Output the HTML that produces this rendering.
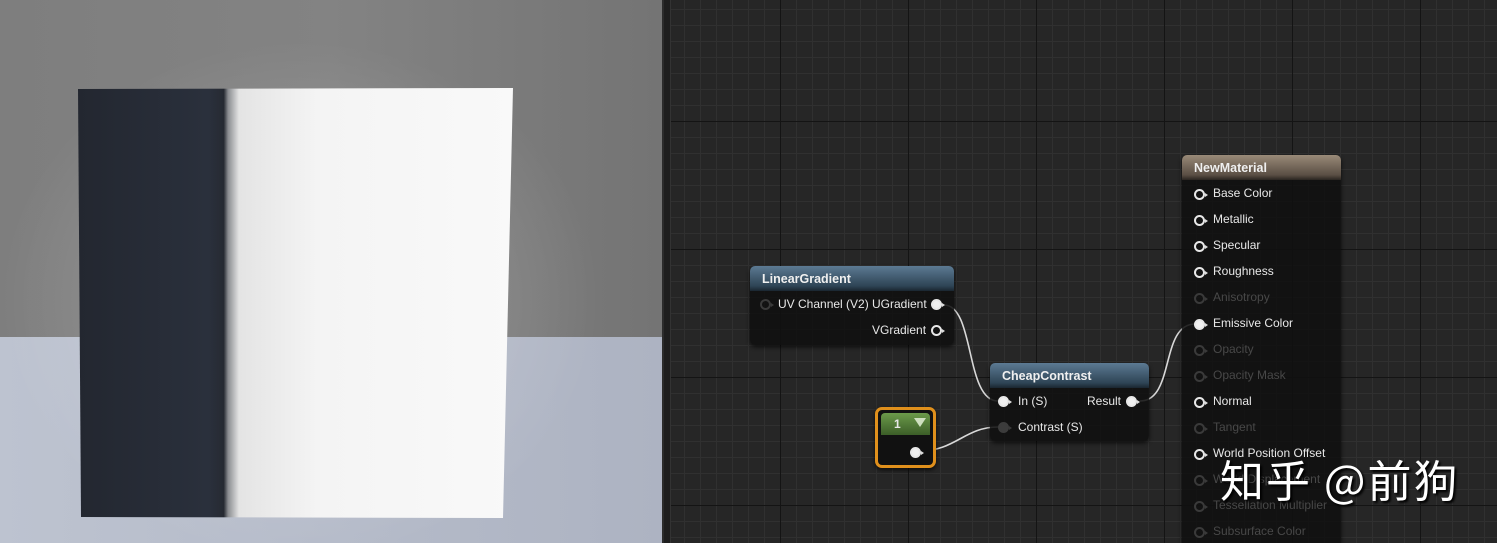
<!DOCTYPE html>
<html><head><meta charset="utf-8"><style>
*{margin:0;padding:0;box-sizing:border-box}
html,body{width:1497px;height:543px;overflow:hidden}
body{position:relative;background:#262626;font-family:"Liberation Sans","Noto Sans CJK SC",sans-serif}
#vp{position:absolute;left:0;top:0;width:662px;height:543px}
#sep{position:absolute;left:662px;top:0;width:9px;height:543px;background:#1e1e1e;border-left:2px solid #2c2c2c;border-right:1px solid #333}
#graph{position:absolute;left:671px;top:0;width:826px;height:543px;background-color:#262626;
background-image:
linear-gradient(to right,#141414 1px,transparent 1px),
linear-gradient(to bottom,#141414 1px,transparent 1px),
linear-gradient(to right,#303030 1px,transparent 1px),
linear-gradient(to bottom,#303030 1px,transparent 1px);
background-size:128px 128px,128px 128px,16px 16px,16px 16px;
background-position:109px 0,0 121px,13px 0,0 9px}
.node{position:absolute;background:rgba(16,16,16,.88);border-radius:5px;box-shadow:0 2px 4px rgba(0,0,0,.7);color:#e8e8e8;font-size:12px}
.hdr{height:25px;border-radius:5px 5px 0 0;font-weight:bold;font-size:12.5px;padding:6px 0 0 12px;color:#f0f0f0}
.row{position:absolute;font-size:12px;white-space:nowrap}
.pin{position:absolute;width:11px;height:11px;border-radius:50%;border:2px solid #e8e8e8}
.pin.f{background:#f0f0f0}
.pin.d{border-color:#3a3a3a}
.pin.g{background:#3c3c3c;border-color:#3c3c3c}
.pin::after{content:"";position:absolute;right:-5px;top:2px;border-left:3px solid #ddd;border-top:2.5px solid transparent;border-bottom:2.5px solid transparent}
.pin.d::after,.pin.g::after{border-left-color:#3a3a3a}
.dim{color:#484848}
#wm{position:absolute;left:1220px;top:448px;font-size:44px;letter-spacing:2px;color:#fff;font-family:"Noto Sans CJK SC",sans-serif;text-shadow:2px 2px 2px #000;white-space:nowrap;line-height:60px}
</style></head><body>
<div id="vp">
<svg width="662" height="543">
<defs>
<linearGradient id="bg" x1="0" x2="1"><stop offset="0" stop-color="#7e7e7e"/><stop offset=".5" stop-color="#838383"/><stop offset="1" stop-color="#747474"/></linearGradient>
<linearGradient id="fl" x1="0" x2="1"><stop offset="0" stop-color="#bdc3d0"/><stop offset="1" stop-color="#adb3c2"/></linearGradient>
<linearGradient id="pl" x1="78" x2="513" gradientUnits="userSpaceOnUse">
<stop offset="0" stop-color="#232730"/><stop offset=".3" stop-color="#2a303c"/><stop offset=".335" stop-color="#262a32"/><stop offset=".345" stop-color="#8a8c90"/><stop offset=".37" stop-color="#e4e4e4"/><stop offset=".55" stop-color="#f4f4f4"/><stop offset="1" stop-color="#f9f9f9"/></linearGradient>
<radialGradient id="glow" cx=".5" cy=".5" r=".5"><stop offset="0" stop-color="#fff" stop-opacity=".25"/><stop offset="1" stop-color="#fff" stop-opacity="0"/></radialGradient>
</defs>
<rect width="662" height="337" fill="url(#bg)"/>
<polygon points="0,337 662,337 662,543 0,543" fill="url(#fl)"/>
<ellipse cx="300" cy="300" rx="300" ry="260" fill="url(#glow)"/>
<polygon points="78,89 513,88 503,518 81,517" fill="url(#pl)"/>
</svg>
</div>
<div id="sep"></div>
<div id="graph"></div>
<svg style="position:absolute;left:0;top:0" width="1497" height="543">
<g fill="none" stroke="#d8d8d8" stroke-width="1.6">
<path d="M944,305 C975,305 965,401 998,401"/>
<path d="M920,451 C955,451 965,427 998,427"/>
<path d="M1140,401 C1175,401 1160,324 1195,324"/>
</g></svg>

<div class="node" style="left:750px;top:266px;width:204px;height:79px">
<div class="hdr" style="background:linear-gradient(#5c7a93,#2e4455 80%,#1a2630)">LinearGradient</div>
<div class="pin d" style="left:10px;top:33px"></div>
<div class="row" style="left:28px;top:31px">UV Channel (V2)</div>
<div class="row" style="left:122px;top:31px">UGradient</div>
<div class="pin f" style="left:181px;top:33px"></div>
<div class="row" style="left:122px;top:57px">VGradient</div>
<div class="pin" style="left:181px;top:59px"></div>
</div>

<div class="node" style="left:990px;top:363px;width:159px;height:78px">
<div class="hdr" style="background:linear-gradient(#5c7a93,#2e4455 80%,#1a2630)">CheapContrast</div>
<div class="pin f" style="left:8px;top:33px"></div>
<div class="row" style="left:28px;top:31px">In (S)</div>
<div class="row" style="left:97px;top:31px">Result</div>
<div class="pin f" style="left:136px;top:33px"></div>
<div class="pin g" style="left:8px;top:59px"></div>
<div class="row" style="left:28px;top:57px">Contrast (S)</div>
</div>

<div class="node" style="left:875px;top:407px;width:61px;height:61px;border:3px solid #e0901c;border-radius:7px;background:#111">
<div style="height:22px;margin:3px 3px 0;border-radius:4px 4px 0 0;background:linear-gradient(#6b9a4a,#3c5e28);font-weight:bold;font-size:12px;padding:4px 0 0 13px">1</div>
<div style="position:absolute;right:7px;top:8px;border-top:9px solid #cfe0c0;border-left:6px solid transparent;border-right:6px solid transparent"></div>
<div class="pin f" style="left:32px;top:37px"></div>
</div>

<div class="node" style="left:1182px;top:155px;width:159px;height:388px;border-radius:5px 5px 0 0">
<div class="hdr" style="background:linear-gradient(#9a8a78,#5a4e44 80%,#2a2520)">NewMaterial</div>
<div class="pin" style="left:12px;top:34px"></div><div class="row" style="left:31px;top:31px">Base Color</div>
<div class="pin" style="left:12px;top:60px"></div><div class="row" style="left:31px;top:57px">Metallic</div>
<div class="pin" style="left:12px;top:86px"></div><div class="row" style="left:31px;top:83px">Specular</div>
<div class="pin" style="left:12px;top:112px"></div><div class="row" style="left:31px;top:109px">Roughness</div>
<div class="pin d" style="left:12px;top:138px"></div><div class="row dim" style="left:31px;top:135px">Anisotropy</div>
<div class="pin f" style="left:12px;top:164px"></div><div class="row" style="left:31px;top:161px">Emissive Color</div>
<div class="pin d" style="left:12px;top:190px"></div><div class="row dim" style="left:31px;top:187px">Opacity</div>
<div class="pin d" style="left:12px;top:216px"></div><div class="row dim" style="left:31px;top:213px">Opacity Mask</div>
<div class="pin" style="left:12px;top:242px"></div><div class="row" style="left:31px;top:239px">Normal</div>
<div class="pin d" style="left:12px;top:268px"></div><div class="row dim" style="left:31px;top:265px">Tangent</div>
<div class="pin" style="left:12px;top:294px"></div><div class="row" style="left:31px;top:291px">World Position Offset</div>
<div class="pin d" style="left:12px;top:320px"></div><div class="row dim" style="left:31px;top:317px">World Displacement</div>
<div class="pin d" style="left:12px;top:346px"></div><div class="row dim" style="left:31px;top:343px">Tessellation Multiplier</div>
<div class="pin d" style="left:12px;top:372px"></div><div class="row dim" style="left:31px;top:369px">Subsurface Color</div>
</div>

<div id="wm">知乎 @前狗</div>
</body></html>
